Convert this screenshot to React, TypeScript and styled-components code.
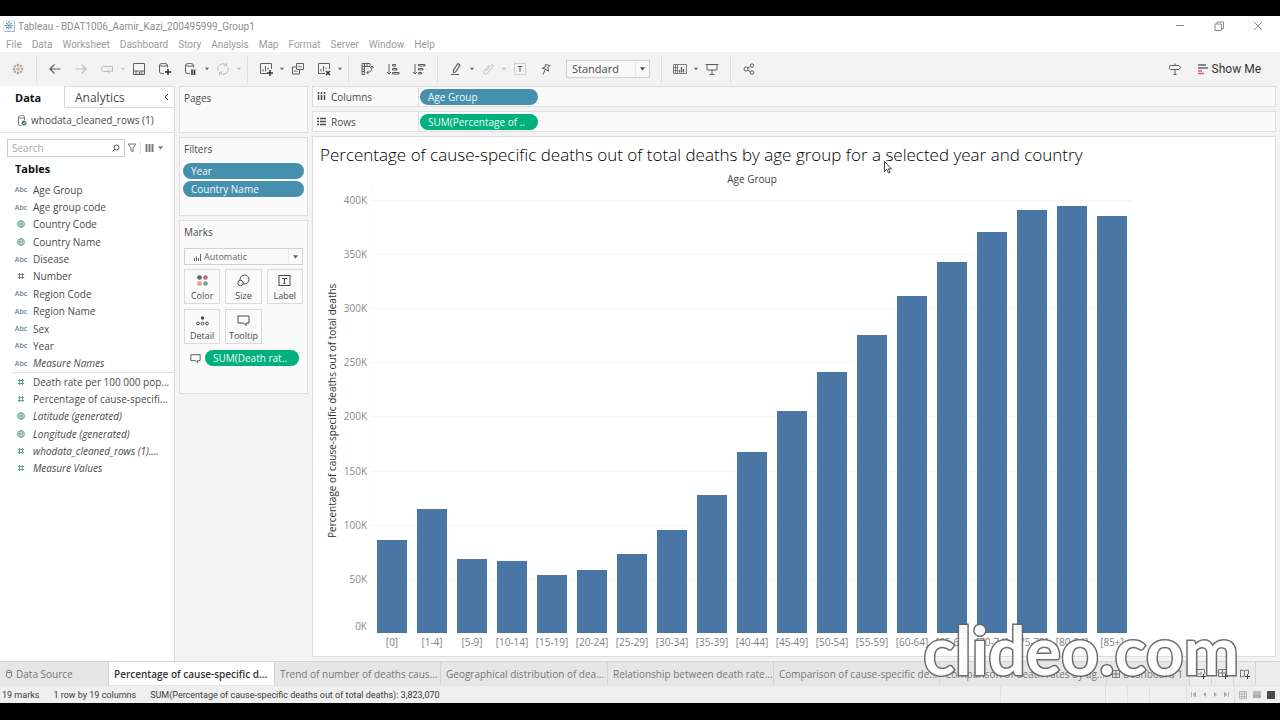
import React from 'react';
import styled, { createGlobalStyle, css } from 'styled-components';

const sans = '"Open Sans", "Noto Sans", sans-serif';
const ui = 'Roboto, "Noto Sans", sans-serif';

const GlobalStyle = createGlobalStyle`
  *, *::before, *::after { box-sizing: border-box; }
  body { margin: 0; background: #000; font-family: ${sans}; font-size: 10px; color: #4a4a4a; }
  button, input, select { font-family: inherit; font-size: inherit; color: inherit; }
  button { background: none; border: 0; padding: 0; }
  ul { list-style: none; margin: 0; padding: 0; }
  h1, h2, h3, p { margin: 0; font-weight: 400; font-size: inherit; }
  svg { display: block; flex: none; }
`;

/* ---------- window frame ---------- */

const Screen = styled.div`
  position: relative;
  min-height: 100vh;
  padding: 16px 0 17px;
  display: flex;
  flex-direction: column;
  background: #000;
  overflow: hidden;
`;

const Window = styled.div`
  flex: 1;
  display: flex;
  flex-direction: column;
  background: #f3f3f3;
`;

const TitleBar = styled.header`
  height: 20px;
  display: flex;
  align-items: center;
  gap: 3px;
  padding: 0 17px 0 3px;
  background: #fff;
  color: #8d8d8d;
  font-family: ${ui};
`;

const WindowTitle = styled.span`
  flex: 1;
`;

const WindowButtons = styled.div`
  display: flex;
  gap: 29px;
  color: #8a8a8a;
`;

const MenuBar = styled.nav`
  height: 16px;
  display: flex;
  align-items: center;
  gap: 10px;
  padding: 0 6px;
  background: #fff;
  color: #9c9c9c;
  font-family: ${ui};
`;

const Toolbar = styled.div`
  height: 34px;
  display: flex;
  align-items: center;
  padding: 0 19px 0 5px;
`;

const ToolButton = styled.button<{ $dim?: boolean }>`
  width: 26px;
  height: 24px;
  display: flex;
  align-items: center;
  justify-content: center;
  color: ${(p) => (p.$dim ? '#bcbcbc' : '#5f5f5f')};
`;

const CaretButton = styled.button<{ $dim?: boolean }>`
  width: 6px;
  height: 24px;
  display: flex;
  align-items: center;
  justify-content: center;
  color: ${(p) => (p.$dim ? '#bcbcbc' : '#5f5f5f')};
`;

const ToolSeparator = styled.span`
  width: 1px;
  height: 28px;
  margin: 0 5px;
  background: #dedede;
`;

const FitBox = styled.div`
  display: flex;
  align-items: center;
  width: 84px;
  height: 18px;
  margin: 0 6px 0 7px;
  border: 1px solid #cfcfcf;
  background: #f8f8f8;
`;

const FitSelect = styled.select`
  flex: 1;
  min-width: 0;
  height: 16px;
  padding: 0 0 0 5px;
  border: 0;
  background: none;
  appearance: none;
  font-size: 11px;
  line-height: 16px;
`;

const SelectCaret = styled.span`
  width: 14px;
  height: 100%;
  display: flex;
  align-items: center;
  justify-content: center;
  border-left: 1px solid #e8e8e8;
`;

const Spacer = styled.span`
  flex: 1;
`;

const ShowMeButton = styled.button`
  display: flex;
  align-items: center;
  gap: 4px;
  margin-left: 10px;
  font-family: ${ui};
  font-size: 12px;
  color: #333;
`;

/* ---------- workspace ---------- */

const Workspace = styled.div`
  flex: 1;
  display: flex;
  min-height: 0;
`;

const DataPane = styled.aside`
  width: 175px;
  flex: none;
  background: #fff;
  border-right: 1px solid #dcdcdc;
`;

const PaneTabs = styled.div`
  display: flex;
  height: 22px;
`;

const PaneTab = styled.button<{ $active?: boolean }>`
  display: flex;
  align-items: center;
  text-align: left;
  ${(p) =>
    p.$active
      ? css`
          width: 64px;
          padding-left: 15px;
          font-size: 11px;
          font-weight: 700;
          color: #111;
        `
      : css`
          flex: 1;
          justify-content: space-between;
          padding: 0 5px 0 10px;
          font-size: 12px;
          border: 1px solid #d9d9d9;
          border-right: 0;
        `}
`;

const SourceRow = styled.div`
  height: 25px;
  display: flex;
  align-items: center;
  gap: 4px;
  padding-left: 17px;
  border-bottom: 1px solid #e4e4e4;
`;

const SearchRow = styled.div`
  display: flex;
  align-items: center;
  padding: 6px 0 0 7px;
`;

const SearchBox = styled.label`
  display: flex;
  align-items: center;
  width: 118px;
  height: 18px;
  padding: 0 4px;
  margin-right: 1px;
  border: 1px solid #cbcbcb;
`;

const SearchInput = styled.input`
  flex: 1;
  min-width: 0;
  padding: 0;
  border: 0;
  outline: 0;
  background: none;
  &::placeholder { color: #a8a8a8; }
`;

const SmallButton = styled.button<{ $divided?: boolean }>`
  height: 14px;
  padding: 0 3px 0 ${(p) => (p.$divided ? '4px' : '1px')};
  display: flex;
  align-items: center;
  color: #777;
  border-left: ${(p) => (p.$divided ? '1px solid #ddd' : '0')};
`;

const TablesHeading = styled.h2`
  padding-left: 15px;
  font-size: 11px;
  font-weight: 700;
  line-height: 24px;
  color: #111;
`;

const FieldList = styled.ul<{ $height: number }>`
  display: grid;
  grid-auto-rows: 1fr;
  height: ${(p) => p.$height}px;
`;

const MeasureDivider = styled.hr`
  margin: 0 0 0 12px;
  border: 0;
  border-top: 1px solid #e0e0e0;
`;

const FieldRow = styled.li<{ $italic?: boolean }>`
  display: flex;
  align-items: center;
  padding-left: 13px;
  font-style: ${(p) => (p.$italic ? 'italic' : 'normal')};
  white-space: nowrap;
`;

const FieldType = styled.span<{ $measure?: boolean }>`
  width: 16px;
  margin-right: 4px;
  display: flex;
  justify-content: center;
  font-size: 7px;
  font-style: normal;
  font-weight: 600;
  color: ${(p) => (p.$measure ? '#5fa287' : '#6c7f8a')};
`;

const CardColumn = styled.section`
  width: 129px;
  flex: none;
  margin: 0 4px;
  display: flex;
  flex-direction: column;
  gap: 4px;
`;

const Card = styled.section<{ $height: number }>`
  min-height: ${(p) => p.$height}px;
  padding: 0 3px;
  background: #fafafa;
  border: 1px solid #dfdfdf;
`;

const CardTitle = styled.h3`
  padding-left: 1px;
  line-height: 23px;
`;

const PillStack = styled.div`
  display: flex;
  flex-direction: column;
  gap: 2px;
  margin-top: 2px;
`;

const Pill = styled.button<{ $measure?: boolean; $width?: number }>`
  width: ${(p) => (p.$width ? `${p.$width}px` : 'auto')};
  height: 16px;
  padding: 0 8px;
  border-radius: 8px;
  line-height: 16px;
  text-align: left;
  white-space: nowrap;
  color: #f2fafa;
  background: ${(p) => (p.$measure ? '#00b07e' : '#4690ad')};
`;

const MarkTypeBox = styled.div`
  display: flex;
  align-items: center;
  height: 17px;
  margin: 4px 1px;
  padding-left: 8px;
  border: 1px solid #d2d2d2;
  color: #666;
`;

const MarkTypeSelect = styled.select`
  flex: 1;
  min-width: 0;
  height: 15px;
  padding: 0 0 0 3px;
  border: 0;
  background: none;
  appearance: none;
  line-height: 15px;
  font-size: 9px;
`;

const MarkGrid = styled.div`
  display: grid;
  grid-template-columns: repeat(3, 1fr);
  gap: 5px;
  margin: 0 1px;
`;

const MarkButton = styled.button`
  height: 35px;
  display: flex;
  flex-direction: column;
  align-items: center;
  justify-content: space-between;
  padding: 4px 0 1px;
  border: 1px solid #dadada;
  font-size: 9px;
  line-height: 12px;
`;

const MarkPillRow = styled.div`
  display: flex;
  align-items: center;
  gap: 4px;
  margin: 6px 0 0 7px;
`;

const SheetArea = styled.main`
  flex: 1;
  min-width: 0;
  display: flex;
  flex-direction: column;
  gap: 4px;
  padding: 0 4px 4px 0;
`;

const Shelf = styled.div`
  display: flex;
  height: 21px;
  background: #fafafb;
  border: 1px solid #dedede;
`;

const ShelfLabel = styled.span`
  width: 106px;
  display: flex;
  align-items: center;
  gap: 5px;
  padding-left: 4px;
  border-right: 1px solid #dedede;
`;

const ShelfBody = styled.div`
  display: flex;
  align-items: center;
  padding-left: 1px;
`;

/* ---------- visualisation ---------- */

const VizPanel = styled.section`
  position: relative;
  flex: 1;
  display: flex;
  flex-direction: column;
  padding: 6px 7px 5px;
  background: #fff;
  border: 1px solid #dcdcdc;
`;

const VizTitle = styled.h1`
  font-size: 17px;
  line-height: 24px;
  font-weight: 300;
  color: #000;
`;

const Chart = styled.figure`
  flex: 1;
  margin: 5px 0 0;
  padding-left: 6px;
  display: grid;
  grid-template-columns: 12px 34px 760px;
  grid-template-rows: 17px 1fr 18px;
`;

const ColumnHeader = styled.figcaption`
  grid-column: 3;
  text-align: center;
  line-height: 14px;
  color: #444;
`;

const AxisTitle = styled.div`
  grid-column: 1;
  grid-row: 2;
  writing-mode: vertical-rl;
  transform: rotate(180deg);
  text-align: center;
  line-height: 12px;
  white-space: nowrap;
  color: #333;
`;

const TickLabels = styled.ul`
  grid-column: 2;
  grid-row: 2;
  display: grid;
  grid-template-rows: 0.2fr repeat(8, 1fr);
  padding-right: 5px;
  text-align: right;
  color: #8a8a8a;
`;

const TickLabel = styled.li<{ $row: number; $atBase?: boolean }>`
  grid-column: 1;
  grid-row: ${(p) => p.$row};
  height: 14px;
  line-height: 14px;
  ${(p) => (p.$atBase ? 'align-self: end;' : 'margin-top: -7px;')}
`;

const Plot = styled.div`
  grid-column: 3;
  grid-row: 2;
  display: grid;
  grid-template: 1fr / 1fr;
  box-shadow: -1px 0 #f7f7f7;
`;

const GridLines = styled.div`
  grid-area: 1 / 1;
  display: grid;
  grid-template-rows: 0.2fr repeat(8, 1fr);
`;

const GridLine = styled.span`
  border-top: 1px solid #f5f5f5;
`;

const Bars = styled.div`
  grid-area: 1 / 1;
  display: grid;
  grid-template-columns: repeat(19, 1fr);
  align-items: end;
`;

const Bar = styled.span`
  margin: 0 5px;
  background: #4a76a5;
`;

const CategoryLabels = styled.ul`
  grid-column: 3;
  display: grid;
  grid-template-columns: repeat(19, 1fr);
  text-align: center;
  line-height: 18px;
  color: #7c7c7c;
`;

const Pointer = styled.svg`
  position: absolute;
  left: 571px;
  top: 24px;
`;

/* ---------- footer ---------- */

const SheetTabs = styled.nav`
  height: 24px;
  display: flex;
  background: #ececec;
  border-top: 1px solid #d5d5d5;
`;

const SheetTab = styled.button<{ $width: number; $active?: boolean }>`
  width: ${(p) => p.$width}px;
  display: flex;
  align-items: center;
  gap: 3px;
  padding-left: 5px;
  border-right: 1px solid #d4d4d4;
  white-space: nowrap;
  overflow: hidden;
  color: ${(p) => (p.$active ? '#333' : '#777')};
  font-weight: ${(p) => (p.$active ? 600 : 400)};
  background: ${(p) => (p.$active ? '#fff' : '#e6e6e6')};
`;

const NewSheetButton = styled.button`
  width: 22px;
  display: flex;
  align-items: center;
  justify-content: center;
  border-right: 1px solid #d4d4d4;
  color: #777;
`;

const StatusBar = styled.footer`
  height: 18px;
  display: flex;
  align-items: center;
  gap: 14px;
  padding-left: 2px;
  background: #efefef;
  border-top: 1px solid #e2e2e2;
  font-family: ${ui};
  font-size: 9px;
  color: #3c3c3c;
`;

const StatusControls = styled.div`
  display: flex;
  align-items: center;
  align-self: stretch;
`;

const StatusCell = styled.span<{ $width: number }>`
  width: ${(p) => p.$width}px;
  height: 100%;
  border-left: 1px solid #dedede;
`;

const StatusButtons = styled.span`
  height: 100%;
  display: flex;
  align-items: center;
  gap: 6px;
  padding: 0 5px 0 4px;
  border-left: 1px solid #dedede;
  color: #aaa;
`;

const Watermark = styled.div`
  position: absolute;
  right: 41px;
  bottom: 37px;
  font-family: Lato, sans-serif;
  font-size: 66px;
  line-height: 66px;
  font-weight: 700;
  color: #fff;
  -webkit-text-stroke: 3px #666;
  paint-order: stroke fill;
  opacity: 0.95;
  pointer-events: none;
`;

/* ---------- icons ---------- */

type IconProps = { w?: number; h?: number; box?: string; children: React.ReactNode };

const Icon = ({ w = 14, h = 14, box, children }: IconProps) => (
  <svg width={w} height={h} viewBox={box ?? `0 0 ${w} ${h}`} fill="none" stroke="currentColor" strokeWidth="1" aria-hidden="true">
    {children}
  </svg>
);

const Caret = ({ size = 4 }: { size?: number }) => (
  <Icon w={size} h={4} box="0 0 6 4">
    <path d="M0 0h6L3 4z" fill="currentColor" stroke="none" />
  </Icon>
);

const TableauMark = () => (
  <Icon w={12} h={12} box="0 0 14 14">
    <path d="M7 4.5v5M4.5 7h5" stroke="#d98b4a" />
    <path d="M7 .8v3M5.5 2.3h3" stroke="#6b7f95" />
    <path d="M7 10.2v3M5.5 11.7h3" stroke="#6b7f95" />
    <path d="M2.2 5.5v3M.8 7h3M11.8 5.5v3M10.2 7h3" stroke="#8a8a9a" />
    <path d="M3.5 2.2v3M2 3.7h3M10.5 2.2v3M9 3.7h3" stroke="#c98a5c" />
    <path d="M3.5 8.8v3M2 10.3h3M10.5 8.8v3M9 10.3h3" stroke="#7d9a8c" />
  </Icon>
);

const AppMark = () => (
  <Icon w={12} h={12} box="0 0 14 14">
    <rect x=".5" y=".5" width="13" height="13" fill="#f4f7f9" stroke="#e2e7ea" />
    <path d="M7 1.5v10M2 6.500h10M3.800 3.300l6.400 6.400M10.200 3.300l-6.400 6.400" stroke="#5f8ba0" strokeWidth="1.300" strokeDasharray="2.400 1" />
    <path d="M13.5 1v12.5H2" stroke="#9aa9c8" />
  </Icon>
);

const Cylinder = () => <path d="M1.500 3c0-2 8-2 8 0v2.500M1.500 3c0 1.600 8 1.600 8 0M1.500 3v7c0 1.200 2 1.600 4.500 1.600" />;

const icons = {
  back: <Icon><path d="M12.500 7H2M6.500 2.500 2 7l4.500 4.500" strokeWidth="1.200" /></Icon>,
  forward: <Icon><path d="M1.500 7h10.500M7.500 2.500 12 7l-4.500 4.500" strokeWidth="1.200" /></Icon>,
  redo: <Icon><path d="M11 9.500h1.500v-5h-9a2 2 0 0 0-2 2v1a2 2 0 0 0 2 2h6M8 7.500l2 2-2 2" /></Icon>,
  save: <Icon><path d="M1.500 1.500h11v11h-11zM4 12.500V9h6v3.500M1.500 9H4M10 9h2.500" /><path d="M7.500 10v2" strokeWidth="1.500" /></Icon>,
  addSource: <Icon><Cylinder /><path d="M10 7v6M7 10h6" strokeWidth="1.500" stroke="#333" /></Icon>,
  pauseSource: <Icon><Cylinder /><path d="M8 7.500V13M10.500 7.500V13" strokeWidth="1.600" stroke="#333" /></Icon>,
  refresh: <Icon><path d="M2 8.500A5 5 0 0 1 10.500 3.500M12 5.500A5 5 0 0 1 3.500 10.500M10.500 1v2.800H7.700M3.500 13v-2.800h2.800" /></Icon>,
  newSheet: <Icon><path d="M8 11.500H1.500v-10h11V7M4 9.500V7M6.500 9.500V4M9 8V5.500" /><path d="M11 8v6M8 11h6" strokeWidth="1.500" stroke="#333" /></Icon>,
  duplicate: <Icon><path d="M5.500 1.500h7v6h-7zM5.500 5H1.500v7h7V7.500M8 5.500V3.500M10 5.500V4M4 10V8M6 10V9" /></Icon>,
  clearSheet: <Icon><path d="M8 11.500H1.500v-10h11V7M4 9.500V7M6.500 9.500V4M9 7V5.500" /><path d="m9 9 4 4m0-4-4 4" strokeWidth="1.500" stroke="#333" /></Icon>,
  swap: <Icon><path d="M2 1.500h8v3H2zM2 4.500h2.500v8H2zM4.500 1.500v3M7 1.500v3M2 7h2.500M2 9.500h2.500M12 4.500c0 4-1.500 6-5 6M10.300 6 12 4l1.500 2M8.700 8.600 6.800 10.500l1.900 1.900" /></Icon>,
  sortAsc: <Icon><path d="M3 2v10M1 10l2 2 2-2" /><path d="M6.500 2.500h3v1.500h-3zM6.500 6.500h4.500v1.500H6.500zM6.500 10.500h6.500v1.500H6.500z" /></Icon>,
  sortDesc: <Icon><path d="M3 2v10M1 10l2 2 2-2" /><path d="M6.500 2.500h6.500v1.500H6.500zM6.500 6.500h4.500v1.500H6.500zM6.500 10.500h3v1.500h-3z" /></Icon>,
  highlight: <Icon><path d="M9 1.500 4.500 8v2.500l2-.5L11 3.300zM2 12.500h8" strokeWidth="1.200" /></Icon>,
  attach: <Icon><path d="m5 9 5-5.500c1.500-1.500 3 .3 1.700 1.700L6.500 11c-2.400 2.400-5-.3-3-2.500L8 3.500" /></Icon>,
  text: <Icon><rect x="1.500" y="1.500" width="11" height="11" stroke="#c2c2c2" strokeDasharray="2 1" /><path d="M4.500 4.500h5M7 4.500v5.500" /></Icon>,
  pin: <Icon><path d="M6.500 2.500 11 3.500 9 5.500l.5 3.500L5 6.500h-2L6 5zM6.200 7.500 4 12.500M9.500 9 8 8" /></Icon>,
  cards: <Icon><path d="M.5 2.500h13v9H.5zM2.500 2.500v9M.5 5.500h4M.5 8.500h4M4.500 2.500v9" strokeWidth=".8" /><path d="M6.500 10.500V8M8.500 10.500V5M10.500 10.500V7" strokeWidth="1.300" /></Icon>,
  present: <Icon><path d="M.5 2.500h13M2 2.500v5.500h10V2.500M7 8v4.500M4.500 12.500h5" /></Icon>,
  share: <Icon><circle cx="4" cy="7" r="2" /><circle cx="10" cy="3.500" r="1.700" /><circle cx="10" cy="10.500" r="1.700" /><path d="m5.800 6 2.700-1.600M5.800 8l2.700 1.700" /></Icon>,
  guide: <Icon><path d="M2.500 3.500h8.500l1.500 2-1.500 2H2.500a1 1 0 0 1-1-1v-2a1 1 0 0 1 1-1zM7 1.500v2M7 7.500v5M5.500 12.500h3" /></Icon>,
};

const ShowMeMark = () => (
  <Icon w={10} h={12}>
    <path d="M0 2h8M0 5h10" stroke="#5d6678" strokeWidth="1.600" />
    <path d="M0 8h4M0 10.500h6" stroke="#cf5f7c" strokeWidth="1.600" />
  </Icon>
);

const SourceMark = () => (
  <Icon w={10} h={12}>
    <path d="M1.500 3c0-2 6-2 6 0v3M1.500 3c0 1.500 6 1.500 6 0M1.500 3v7c0 1 1 1.500 3 1.500" stroke="#777" />
    <circle cx="7" cy="9" r="2.500" fill="#3f8467" stroke="none" />
    <path d="m6 9 1 1 1.500-1.800" stroke="#fff" strokeWidth=".8" />
  </Icon>
);

const GlobeMark = () => (
  <Icon w={8} h={8}>
    <circle cx="4" cy="4" r="3.400" />
    <path d="M.6 4h6.800M4 .6v6.800M4 .6C1.800 2.500 1.800 5.500 4 7.400M4 .6c2.200 1.900 2.200 4.900 0 6.800" strokeWidth=".7" />
  </Icon>
);

const HashMark = () => (
  <Icon w={8} h={8}>
    <path d="M2.500 1v6M5.500 1v6M.8 2.500h6.400M.8 5.500h6.400" />
  </Icon>
);

const BubbleMark = ({ size = 13 }: { size?: number }) => (
  <Icon w={size} h={size} box="0 0 13 13">
    <path d="M1 2h11v7H9v2.500L6.500 9H1z" />
  </Icon>
);

const markIcons: Record<string, React.ReactNode> = {
  Color: (
    <Icon w={13} h={13}>
      <g stroke="none">
        <circle cx="3.500" cy="3.500" r="2.300" fill="#59636f" />
        <circle cx="9.500" cy="3.500" r="2.300" fill="#c9607f" />
        <circle cx="3.500" cy="9.500" r="2.300" fill="#e29a72" />
        <circle cx="9.500" cy="9.500" r="2.300" fill="#6ea3a0" />
      </g>
    </Icon>
  ),
  Size: <Icon w={13} h={13}><circle cx="7.500" cy="5.500" r="4.500" /><circle cx="3.500" cy="9" r="2.700" fill="#fafafa" /></Icon>,
  Label: <Icon w={13} h={13}><rect x="1" y="1.500" width="11" height="10" /><path d="M4 4.500h5M6.500 4.500v5M5.500 9.500h2" /></Icon>,
  Detail: (
    <Icon w={13} h={13}>
      <circle cx="6.500" cy="4" r="1.700" fill="currentColor" stroke="none" />
      <circle cx="2" cy="9.500" r="1.400" /><circle cx="6.500" cy="9.500" r="1.400" /><circle cx="11" cy="9.500" r="1.400" />
    </Icon>
  ),
  Tooltip: <BubbleMark />,
};

/* ---------- data ---------- */

type Kind = 'abc' | 'geo' | 'num';
type Field = { name: string; kind: Kind; italic?: boolean };

const dimensions: Field[] = [
  { name: 'Age Group', kind: 'abc' },
  { name: 'Age group code', kind: 'abc' },
  { name: 'Country Code', kind: 'geo' },
  { name: 'Country Name', kind: 'geo' },
  { name: 'Disease', kind: 'abc' },
  { name: 'Number', kind: 'num' },
  { name: 'Region Code', kind: 'abc' },
  { name: 'Region Name', kind: 'abc' },
  { name: 'Sex', kind: 'abc' },
  { name: 'Year', kind: 'abc' },
  { name: 'Measure Names', kind: 'abc', italic: true },
];

const measures: Field[] = [
  { name: 'Death rate per 100 000 pop...', kind: 'num' },
  { name: 'Percentage of cause-specifi...', kind: 'num' },
  { name: 'Latitude (generated)', kind: 'geo', italic: true },
  { name: 'Longitude (generated)', kind: 'geo', italic: true },
  { name: 'whodata_cleaned_rows (1)....', kind: 'num', italic: true },
  { name: 'Measure Values', kind: 'num', italic: true },
];

const axisMax = 410;
const ticks = [400, 350, 300, 250, 200, 150, 100, 50];

const ageGroups: [string, number][] = [
  ['[0]', 85.5], ['[1-4]', 114.5], ['[5-9]', 68.5], ['[10-14]', 66.5], ['[15-19]', 54],
  ['[20-24]', 58.5], ['[25-29]', 73], ['[30-34]', 95], ['[35-39]', 127], ['[40-44]', 167],
  ['[45-49]', 205], ['[50-54]', 241], ['[55-59]', 275], ['[60-64]', 311], ['[65-69]', 343],
  ['[70-74]', 370], ['[75-79]', 391], ['[80-84]', 394], ['[85+]', 385],
];

const menus = ['File', 'Data', 'Worksheet', 'Dashboard', 'Story', 'Analysis', 'Map', 'Format', 'Server', 'Window', 'Help'];

const sheets = [
  { name: 'Percentage of cause-specific d...', active: true },
  { name: 'Trend of number of deaths caus...' },
  { name: 'Geographical distribution of dea...' },
  { name: 'Relationship between death rate...' },
  { name: 'Comparison of cause-specific de...' },
  { name: 'Comparison of death rates by ag...' },
];

/* ---------- pieces ---------- */

const Tool = ({ icon, label, dim }: { icon: keyof typeof icons; label: string; dim?: boolean }) => (
  <ToolButton aria-label={label} $dim={dim}>{icons[icon]}</ToolButton>
);

const Drop = ({ label, dim }: { label: string; dim?: boolean }) => (
  <CaretButton aria-label={label} $dim={dim}><Caret /></CaretButton>
);

const FieldItem = ({ field, measure }: { field: Field; measure?: boolean }) => (
  <FieldRow $italic={field.italic}>
    <FieldType $measure={measure || field.kind === 'geo'}>
      {field.kind === 'abc' ? 'Abc' : field.kind === 'geo' ? <GlobeMark /> : <HashMark />}
    </FieldType>
    {field.name}
  </FieldRow>
);

export default function App() {
  return (
    <Screen>
      <GlobalStyle />
      <Window>
        <TitleBar>
          <AppMark />
          <WindowTitle>Tableau - BDAT1006_Aamir_Kazi_200495999_Group1</WindowTitle>
          <WindowButtons>
            <button aria-label="Minimize"><Icon w={10} h={10}><path d="M1 4.500h8" /></Icon></button>
            <button aria-label="Restore"><Icon w={10} h={10}><path d="M1 3h6.500v6.500H1zM3 3V1h6.500v6.500h-2" /></Icon></button>
            <button aria-label="Close"><Icon w={10} h={10}><path d="m1 1 8 8m0-8-8 8" /></Icon></button>
          </WindowButtons>
        </TitleBar>
        <MenuBar>
          {menus.map((m) => <button key={m}>{m}</button>)}
        </MenuBar>
        <Toolbar>
          <ToolButton aria-label="Start page"><TableauMark /></ToolButton>
          <ToolSeparator />
          <Tool icon="back" label="Undo" />
          <Tool icon="forward" label="Redo" dim />
          <Tool icon="redo" label="Replay" dim />
          <Drop label="Replay options" dim />
          <Tool icon="save" label="Save" />
          <Tool icon="addSource" label="New data source" />
          <Tool icon="pauseSource" label="Pause auto updates" />
          <Drop label="Update options" />
          <Tool icon="refresh" label="Run update" dim />
          <Drop label="Run options" dim />
          <ToolSeparator />
          <Tool icon="newSheet" label="New worksheet" />
          <Drop label="New sheet options" />
          <Tool icon="duplicate" label="Duplicate" />
          <Tool icon="clearSheet" label="Clear sheet" />
          <Drop label="Clear options" />
          <ToolSeparator />
          <Tool icon="swap" label="Swap rows and columns" />
          <Tool icon="sortAsc" label="Sort ascending" />
          <Tool icon="sortDesc" label="Sort descending" />
          <ToolSeparator />
          <Tool icon="highlight" label="Highlight" />
          <Drop label="Highlight options" />
          <Tool icon="attach" label="Group members" dim />
          <Drop label="Group options" dim />
          <Tool icon="text" label="Show mark labels" />
          <Tool icon="pin" label="Fix axes" />
          <FitBox>
            <FitSelect aria-label="Fit"><option>Standard</option></FitSelect>
            <SelectCaret><Caret size={5} /></SelectCaret>
          </FitBox>
          <ToolSeparator />
          <Tool icon="cards" label="Show or hide cards" />
          <Drop label="Card options" />
          <Tool icon="present" label="Presentation mode" />
          <ToolSeparator />
          <Tool icon="share" label="Share" />
          <Spacer />
          <Tool icon="guide" label="Data guide" />
          <ShowMeButton><ShowMeMark />Show Me</ShowMeButton>
        </Toolbar>

        <Workspace>
          <DataPane>
            <PaneTabs>
              <PaneTab $active>Data</PaneTab>
              <PaneTab>
                Analytics
                <Icon w={5} h={8}><path d="M4 1 1 4l3 3" /></Icon>
              </PaneTab>
            </PaneTabs>
            <SourceRow><SourceMark />whodata_cleaned_rows (1)</SourceRow>
            <SearchRow>
              <SearchBox>
                <SearchInput type="text" placeholder="Search" aria-label="Search fields" />
                <Icon w={8} h={8}><circle cx="4.500" cy="3.500" r="2.500" /><path d="M2.700 5.300.8 7.200" /></Icon>
              </SearchBox>
              <SmallButton aria-label="Filter fields"><Icon w={10} h={10}><path d="M1 1h8L6 5v4L4 7.500V5z" /></Icon></SmallButton>
              <SmallButton aria-label="View as list" $divided>
                <Icon w={9} h={8}><path d="M1.500 0v8M4.500 0v8M7.500 0v8" strokeWidth="2" /></Icon>
              </SmallButton>
              <SmallButton aria-label="Pane menu"><Caret size={5} /></SmallButton>
            </SearchRow>
            <TablesHeading>Tables</TablesHeading>
            <FieldList $height={191}>
              {dimensions.map((f) => <FieldItem key={f.name} field={f} />)}
            </FieldList>
            <MeasureDivider />
            <FieldList $height={104}>
              {measures.map((f) => <FieldItem key={f.name} field={f} measure />)}
            </FieldList>
          </DataPane>

          <CardColumn>
            <Card $height={47}><CardTitle>Pages</CardTitle></Card>
            <Card $height={79}>
              <CardTitle>Filters</CardTitle>
              <PillStack>
                <Pill>Year</Pill>
                <Pill>Country Name</Pill>
              </PillStack>
            </Card>
            <Card $height={174}>
              <CardTitle>Marks</CardTitle>
              <MarkTypeBox>
                <Icon w={8} h={8}><path d="M1.500 8V5M3.500 8V3.500M5.500 8V5M7.500 8V1" /></Icon>
                <MarkTypeSelect aria-label="Mark type"><option>Automatic</option></MarkTypeSelect>
                <SelectCaret><Caret size={5} /></SelectCaret>
              </MarkTypeBox>
              <MarkGrid>
                {Object.entries(markIcons).map(([name, icon]) => (
                  <MarkButton key={name}>{icon}{name}</MarkButton>
                ))}
              </MarkGrid>
              <MarkPillRow>
                <BubbleMark size={11} />
                <Pill $measure $width={94}>SUM(Death rat..</Pill>
              </MarkPillRow>
            </Card>
          </CardColumn>

          <SheetArea>
            <Shelf>
              <ShelfLabel>
                <Icon w={9} h={9}><path d="M1.500 0v2M4.500 0v2M7.500 0v2M1.500 3v5M4.500 3v5M7.500 3v5" strokeWidth="1.500" /></Icon>
                Columns
              </ShelfLabel>
              <ShelfBody><Pill $width={118}>Age Group</Pill></ShelfBody>
            </Shelf>
            <Shelf>
              <ShelfLabel>
                <Icon w={9} h={9}><path d="M0 1.500h2M0 4.500h2M0 7.500h2M3 1.500h6M3 4.500h6M3 7.500h6" strokeWidth="1.300" /></Icon>
                Rows
              </ShelfLabel>
              <ShelfBody><Pill $measure $width={118}>SUM(Percentage of ..</Pill></ShelfBody>
            </Shelf>
            <VizPanel>
              <VizTitle>
                Percentage of cause-specific deaths out of total deaths by age group for a selected year and country
              </VizTitle>
              <Chart>
                <ColumnHeader>Age Group</ColumnHeader>
                <AxisTitle>Percentage of cause-specific deaths out of total deaths</AxisTitle>
                <TickLabels>
                  {ticks.map((t, i) => <TickLabel key={t} $row={i + 2}>{t}K</TickLabel>)}
                  <TickLabel $row={9} $atBase>0K</TickLabel>
                </TickLabels>
                <Plot>
                  <GridLines>
                    <span />
                    {ticks.map((t) => <GridLine key={t} />)}
                  </GridLines>
                  <Bars>
                    {ageGroups.map(([group, value]) => (
                      <Bar key={group} style={{ height: `${(value / axisMax) * 100}%` }} />
                    ))}
                  </Bars>
                </Plot>
                <CategoryLabels>
                  {ageGroups.map(([group]) => <li key={group}>{group}</li>)}
                </CategoryLabels>
              </Chart>
              <Pointer width="8" height="13" viewBox="0 0 8 13">
                <path d="M.5.5v10l2.300-2.200L4.500 12l1.500-.7-1.600-3.500h3z" fill="#fff" stroke="#333" strokeWidth=".9" />
              </Pointer>
            </VizPanel>
          </SheetArea>
        </Workspace>

        <SheetTabs>
          <SheetTab $width={109}>
            <Icon w={8} h={10}><path d="M1.500 2.500c0-1.500 5-1.500 5 0v5c0 1.500-5 1.500-5 0zM1.500 2.500c0 1.500 5 1.500 5 0" /></Icon>
            Data Source
          </SheetTab>
          {sheets.map((s, i) => <SheetTab key={s.name} $width={i % 3 === 2 ? 167 : 166} $active={s.active}>{s.name}</SheetTab>)}
          <SheetTab $width={83}>
            <Icon w={8} h={8}><path d="M.5.5h7v7h-7zM.5 4h7M4 .5v7" /></Icon>
            Dashboard 1
          </SheetTab>
          <NewSheetButton aria-label="New worksheet">
            <Icon w={11} h={11}><path d="M6 8.500H1.500v-7h8V6M4 7V5M6 7V4" /><path d="M8.500 6v5M6 8.500h5" stroke="#444" /></Icon>
          </NewSheetButton>
          <NewSheetButton aria-label="New dashboard">
            <Icon w={11} h={11}><path d="M6 8.500H1.500v-7h8V6M1.500 5h8M5.500 1.500v7" /><path d="M8.500 6v5M6 8.500h5" stroke="#444" /></Icon>
          </NewSheetButton>
          <NewSheetButton aria-label="New story">
            <Icon w={11} h={11}><path d="M6 8 1.500 9V2l4 .800 4-.800v4M5.500 3v5" /><path d="M8.500 6v5M6 8.500h5" stroke="#444" /></Icon>
          </NewSheetButton>
        </SheetTabs>
        <StatusBar>
          <span>19 marks</span>
          <span>1 row by 19 columns</span>
          <span>SUM(Percentage of cause-specific deaths out of total deaths): 3,823,070</span>
          <Spacer />
          <StatusControls>
            <StatusCell $width={105} />
            <StatusCell $width={22} />
            <StatusCell $width={22} />
            <StatusCell $width={37} />
            <StatusButtons>
              <Icon w={5} h={5}><path d="M.5 0v5M5 0 2 2.500 5 5z" fill="currentColor" strokeWidth=".8" /></Icon>
              <Icon w={5} h={5}><path d="M4 0 1 2.500 4 5z" fill="currentColor" stroke="none" /></Icon>
              <Icon w={5} h={5}><path d="m1 0 3 2.500L1 5z" fill="currentColor" stroke="none" /></Icon>
              <Icon w={5} h={5}><path d="M4.500 0v5M0 0l3 2.500L0 5z" fill="currentColor" strokeWidth=".8" /></Icon>
            </StatusButtons>
            <StatusButtons>
              <Icon w={8} h={8}><path d="M.5.5h7v7h-7zM3 .5v7M5.500.5v7M.5 3h7M.5 5.500h7" strokeWidth=".8" /></Icon>
              <Icon w={8} h={8}><path d="M0 1h8M0 3h8M0 6h8" strokeWidth="1.500" /><path d="M0 5.500h8" strokeWidth="3" /></Icon>
              <Icon w={8} h={8}><rect width="8" height="8" fill="#4a4a4a" stroke="none" /></Icon>
            </StatusButtons>
          </StatusControls>
        </StatusBar>
      </Window>
      <Watermark>clideo.com</Watermark>
    </Screen>
  );
}
